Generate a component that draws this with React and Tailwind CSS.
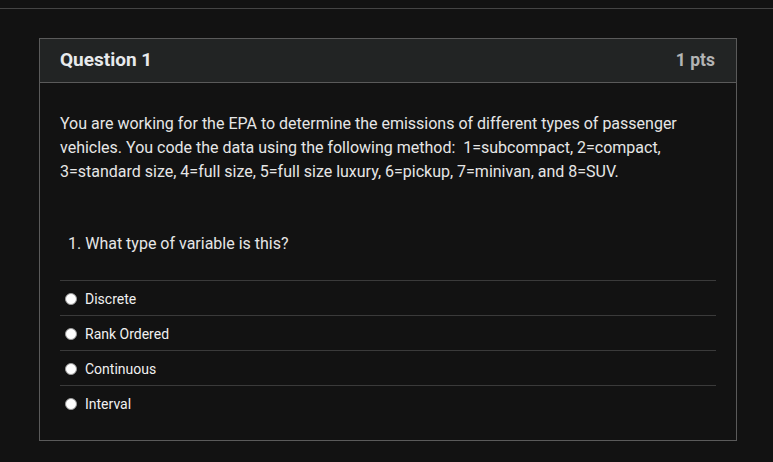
export default function App() {
  const options = ["Discrete", "Rank Ordered", "Continuous", "Interval"];
  return (
    <div className="w-[773px] h-[462px] bg-[#121212] overflow-hidden" style={{ fontFamily: "Roboto, 'Liberation Sans', sans-serif" }}>
      <div className="h-[8px]" />
      <div className="border-t border-[#444444]" />
      <div className="h-[29px]" />
      <div className="ml-[39px] w-[698px] border border-[#5a5a5a]">
        <div className="h-[44px] bg-[#222424] border-b border-[#5a5a5a] pl-[20px] pr-[21px] flex items-center justify-between">
          <span className="text-[19px] font-bold text-[#e8eaed]">Question 1</span>
          <span className="text-[17.5px] font-bold text-[#b4b4b4]">1 pts</span>
        </div>
        <div className="px-[20px] pt-[29px] pb-[20px]">
          <p className="text-[16px] leading-[24px] text-[#e6e6e6]">
            You are working for the EPA to determine the emissions of different types of passenger vehicles. You code the data using the following method:&nbsp; 1=subcompact, 2=compact, 3=standard size, 4=full size, 5=full size luxury, 6=pickup, 7=minivan, and 8=SUV.
          </p>
          <p className="mt-[48px] pl-[8px] text-[16px] leading-[24px] text-[#e6e6e6]">1. What type of variable is this?</p>
          <div className="mt-[24px]">
            {options.map((o) => (
              <div key={o} className="h-[35px] border-t border-[#3a3a3a] flex items-center pl-[5px] pt-[2px]">
                <span className="w-[12px] h-[12px] rounded-full bg-white border border-[#9a9a9a] shrink-0" />
                <span className="ml-[8px] text-[14px] text-[#f0f0f0]">{o}</span>
              </div>
            ))}
          </div>
        </div>
      </div>
    </div>
  );
}
